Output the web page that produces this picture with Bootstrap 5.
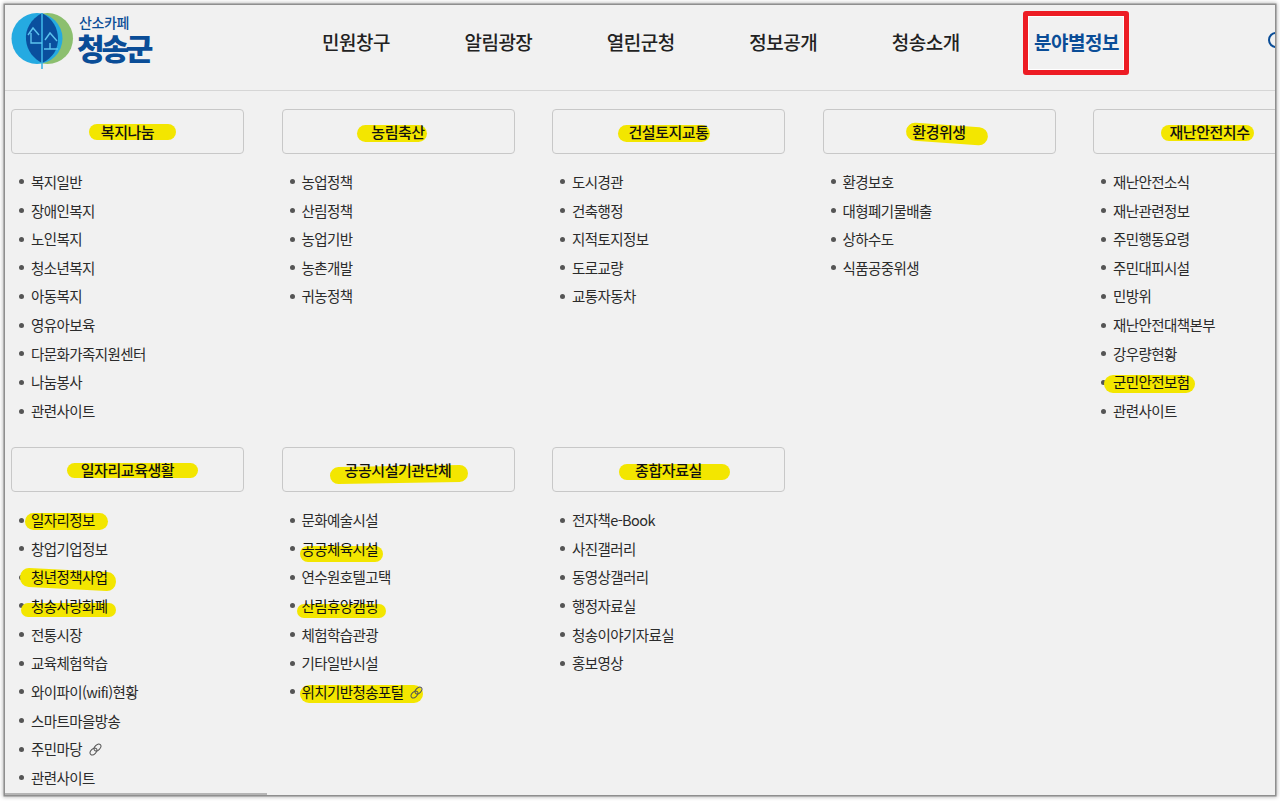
<!DOCTYPE html>
<html lang="ko">
<head>
<meta charset="utf-8">
<title>청송군 분야별정보</title>
<link href="https://cdn.jsdelivr.net/npm/bootstrap@5.3.0/dist/css/bootstrap.min.css" rel="stylesheet">
<style>
html,body{height:100%;}
body{background:#fff;font-family:"Noto Sans CJK KR","Noto Sans",sans-serif;color:#222;overflow:hidden;}
.shot-frame{width:1270px;height:790px;margin:5px 0 0 5px;background:#f1f1f1;box-shadow:0 0 0 1.5px #8f8f8f,0 0 4px 2px #b5b5b5;overflow:hidden;position:relative;}
.top-head{height:86px;border-bottom:1px solid #d6d6d6;position:relative;}
.logo-area{width:317px;padding:8px 0 0 6px;gap:2px;}
.logo-txt{color:#0a4d97;line-height:1;}
.logo-sub{font-size:14px;font-weight:500;letter-spacing:-.4px;margin:2px 0 0 2px;height:17px;}
.logo-main{font-size:30px;font-weight:900;letter-spacing:-3.2px;height:32px;}
.top-menu{gap:74.5px;list-style:none;margin:0;padding:0;height:72px;}
.top-menu li{font-size:19px;letter-spacing:-.5px;font-weight:500;color:#222;position:relative;line-height:1;}
.top-menu li.on{color:#0a4d97;font-weight:700;}
.red-box{position:absolute;left:-11px;top:-21px;width:106px;height:64px;border:5px solid #ed1c24;border-radius:3px;box-shadow:inset 0 0 0 1px #fff;}
.find-icon{position:absolute;left:1262px;top:26px;}
.sec-grid{display:grid;grid-template-columns:repeat(5,233px);column-gap:37.5px;row-gap:21.8px;padding:18px 0 0 6px;width:1400px;}
.sec-box{height:45px;border:1px solid #c8c8c8;border-radius:4px;font-size:15px;letter-spacing:-.45px;font-weight:500;color:#111;line-height:20px;}
.sec-list{list-style:none;margin:13.6px 0 0;padding:0 0 0 8px;}
.sec-list li{height:28.65px;font-size:14.5px;letter-spacing:-.6px;line-height:20px;color:#2b2b2b;display:flex;align-items:center;gap:7px;white-space:nowrap;}
.sec-list li::before{content:"";width:5px;height:5px;border-radius:50%;background:#555;flex:none;}
.pen{position:relative;z-index:0;color:#111;}
.pen::before{content:"";position:absolute;z-index:-1;background:#f3e600;border-radius:9px;}
.p1::before{left:-12px;right:-22px;top:2px;bottom:2px;}
.p2::before{left:-14px;right:-2px;top:3px;bottom:0;}
.p3::before{left:-10px;right:-1px;top:3px;bottom:0;}
.p4::before{left:-6px;right:-23px;top:3px;bottom:-1px;transform:rotate(4deg);}
.p5::before{left:-8px;right:-4px;top:3px;bottom:1px;}
.p6::before{left:-14px;right:-24px;top:3px;bottom:2px;}
.p7::before{left:-15px;right:-16px;top:6px;bottom:-3px;transform:rotate(-1deg);}
.p8::before{left:-16px;right:-28px;top:4px;bottom:0;}
.q1::before{left:-6px;right:-13px;top:3px;bottom:0;}
.q2::before{left:-11px;right:-9px;top:3px;bottom:-2px;transform:rotate(3deg);}
.q3::before{left:-10px;right:-9px;top:7px;bottom:-1px;}
.q4::before{left:-2px;right:-5px;top:7px;bottom:-3px;}
.q5::before{left:-5px;right:-8px;top:8px;bottom:-2px;}
.q6::before{left:-2px;right:0;top:3px;bottom:-1px;}
.q7::before{left:-9px;right:-6px;top:3px;bottom:-1px;}
.chain{flex:none;}
.chain-gap{margin-left:7px;vertical-align:-1px;}
.chain-line{fill:none;stroke:#555;stroke-width:1;}
.bottom-bar{position:absolute;left:0;bottom:0;width:262px;height:2px;background:#b5b5b5;}
</style>
</head>
<body>
<div class="shot-frame">
  <header class="top-head d-flex">
    <div class="logo-area d-flex align-items-start">
      <svg width="64" height="62" viewBox="0 0 64 62" aria-hidden="true">
        <circle cx="36.5" cy="25.5" r="25.5" fill="#8cbf6f"/>
        <circle cx="26" cy="25.5" r="25.5" fill="#25aae1"/>
        <path d="M31 0C20 6 14 16 15 27C16 38 23 46 31 50C42 45 47 36 47 26C47 15 42 6 31 0Z" fill="#0a4f9e"/>
        <path d="M31 0V56" stroke="#3db4e6" stroke-width="1.6" fill="none"/>
        <path d="M17 22L22 15L28 22M20 20V30H31M34 27L39 20L46 28M33 36H47M39 30V36" stroke="#5cc3ee" stroke-width="1.4" fill="none"/>
      </svg>
      <div class="logo-txt">
        <div class="logo-sub">산소카페</div>
        <div class="logo-main">청송군</div>
      </div>
    </div>
    <ul class="top-menu d-flex align-items-center">
      <li>민원창구</li>
      <li>알림광장</li>
      <li>열린군청</li>
      <li>정보공개</li>
      <li>청송소개</li>
      <li class="on">분야별정보<span class="red-box"></span></li>
    </ul>
    <svg class="find-icon" width="20" height="20" viewBox="0 0 20 20" aria-hidden="true"><circle cx="9" cy="9" r="7" fill="none" stroke="#0a4d97" stroke-width="2"/></svg>
  </header>
  <main class="sec-grid">
    <section>
      <div class="sec-box d-flex align-items-center justify-content-center"><span class="pen p1">복지나눔</span></div>
      <ul class="sec-list"><li>복지일반</li><li>장애인복지</li><li>노인복지</li><li>청소년복지</li><li>아동복지</li><li>영유아보육</li><li>다문화가족지원센터</li><li>나눔봉사</li><li>관련사이트</li></ul>
    </section>
    <section>
      <div class="sec-box d-flex align-items-center justify-content-center"><span class="pen p2">농림축산</span></div>
      <ul class="sec-list"><li>농업정책</li><li>산림정책</li><li>농업기반</li><li>농촌개발</li><li>귀농정책</li></ul>
    </section>
    <section>
      <div class="sec-box d-flex align-items-center justify-content-center"><span class="pen p3">건설토지교통</span></div>
      <ul class="sec-list"><li>도시경관</li><li>건축행정</li><li>지적토지정보</li><li>도로교량</li><li>교통자동차</li></ul>
    </section>
    <section>
      <div class="sec-box d-flex align-items-center justify-content-center"><span class="pen p4">환경위생</span></div>
      <ul class="sec-list"><li>환경보호</li><li>대형폐기물배출</li><li>상하수도</li><li>식품공중위생</li></ul>
    </section>
    <section>
      <div class="sec-box d-flex align-items-center justify-content-center"><span class="pen p5">재난안전치수</span></div>
      <ul class="sec-list"><li>재난안전소식</li><li>재난관련정보</li><li>주민행동요령</li><li>주민대피시설</li><li>민방위</li><li>재난안전대책본부</li><li>강우량현황</li><li><span class="pen q7">군민안전보험</span></li><li>관련사이트</li></ul>
    </section>
    <section>
      <div class="sec-box d-flex align-items-center justify-content-center"><span class="pen p6">일자리교육생활</span></div>
      <ul class="sec-list"><li><span class="pen q1">일자리정보</span></li><li>창업기업정보</li><li><span class="pen q2">청년정책사업</span></li><li><span class="pen q3">청송사랑화폐</span></li><li>전통시장</li><li>교육체험학습</li><li>와이파이(wifi)현황</li><li>스마트마을방송</li><li><span>주민마당</span><svg class="chain" width="13" height="13" viewBox="0 0 13 13" aria-hidden="true"><ellipse class="chain-line" cx="8.5" cy="4.5" rx="4" ry="2.6" transform="rotate(-45 8.5 4.5)"/><ellipse class="chain-line" cx="4.5" cy="8.5" rx="4" ry="2.6" transform="rotate(-45 4.5 8.5)"/></svg></li><li>관련사이트</li></ul>
    </section>
    <section>
      <div class="sec-box d-flex align-items-center justify-content-center"><span class="pen p7">공공시설기관단체</span></div>
      <ul class="sec-list"><li>문화예술시설</li><li><span class="pen q4">공공체육시설</span></li><li>연수원호텔고택</li><li><span class="pen q5">산림휴양캠핑</span></li><li>체험학습관광</li><li>기타일반시설</li><li><span class="pen q6">위치기반청송포털<svg class="chain chain-gap" width="13" height="13" viewBox="0 0 13 13" aria-hidden="true"><ellipse class="chain-line" cx="8.5" cy="4.5" rx="4" ry="2.6" transform="rotate(-45 8.5 4.5)"/><ellipse class="chain-line" cx="4.5" cy="8.5" rx="4" ry="2.6" transform="rotate(-45 4.5 8.5)"/></svg></span></li></ul>
    </section>
    <section>
      <div class="sec-box d-flex align-items-center justify-content-center"><span class="pen p8">종합자료실</span></div>
      <ul class="sec-list"><li>전자책e-Book</li><li>사진갤러리</li><li>동영상갤러리</li><li>행정자료실</li><li>청송이야기자료실</li><li>홍보영상</li></ul>
    </section>
  </main>
  <div class="bottom-bar"></div>
</div>
<script src="https://cdn.jsdelivr.net/npm/bootstrap@5.3.0/dist/js/bootstrap.bundle.min.js"></script>
</body>
</html>
